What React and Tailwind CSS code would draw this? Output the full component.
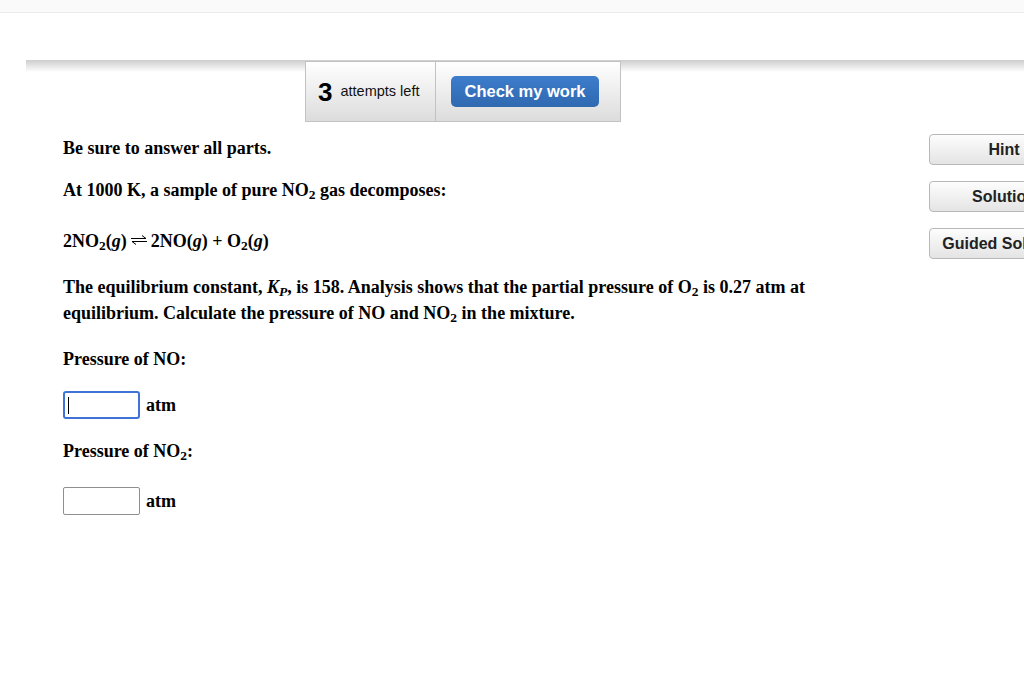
import React from 'react';

function EqArrow() {
  return (
    <svg width="18" height="12" viewBox="0 0 18 12" className="mx-[3px] inline-block align-[1px]" fill="none" stroke="#000" strokeWidth="1">
      <path d="M1 4.5h15M16 4.5l-4-3" />
      <path d="M17 7.5H2M2 7.5l4 3" />
    </svg>
  );
}

function SideButton({ children }) {
  return (
    <button className="h-[31px] w-[150px] rounded-[4px] border border-[#b8b8b8] bg-[linear-gradient(to_bottom,#fdfdfd,#e4e4e4)] text-center font-['Liberation_Sans',Arial,sans-serif] text-base font-bold text-[#222]">
      {children}
    </button>
  );
}

function AnswerBox({ focused }) {
  return (
    <div className="flex items-center gap-[6px]">
      {focused ? (
        <div className="flex h-[28px] w-[77px] items-center rounded-[3px] border-2 border-[#3f74d6] px-[3px]">
          <span className="h-[17px] w-px bg-black" />
        </div>
      ) : (
        <div className="h-[28px] w-[77px] rounded-[2px] border border-[#8f8f8f]" />
      )}
      <span>atm</span>
    </div>
  );
}

export default function App() {
  return (
    <div className="relative h-[675px] w-[1024px] overflow-hidden bg-white">
      <div className="h-[13px] border-b border-[#ececec] bg-[#fafafa]" />

      <div className="ml-[26px] mt-[47px] flex bg-[linear-gradient(to_bottom,#cdcdcd,#ffffff_12px)] pl-[279px]">
        <div className="mt-px flex h-[61px] border border-[#c2c2c2] bg-[linear-gradient(to_bottom,#ffffff,#dcdcdc)] font-['Liberation_Sans',Arial,sans-serif]">
          <div className="flex w-[130px] items-center gap-[8px] border-r border-[#c2c2c2] pl-[12px]">
            <span className="text-[26px] font-bold leading-none">3</span>
            <span className="text-[14.5px] text-[#111]">attempts left</span>
          </div>
          <div className="flex w-[184px] items-center pl-[15px]">
            <button className="h-[31px] w-[148px] rounded-[5px] bg-[linear-gradient(to_bottom,#3d7dcc,#2f69b0)] text-[16.5px] font-bold text-white">
              Check my work
            </button>
          </div>
        </div>
      </div>

      <div className="flex">
        <div className="w-[929px] shrink-0 pl-[63px] pt-[16px] font-['Liberation_Serif','Times_New_Roman',serif] text-[18px] font-bold leading-[20px] text-black">
          <p>Be sure to answer all parts.</p>
          <p className="mt-[22px]">
            At 1000 K, a sample of pure NO<sub>2</sub> gas decomposes:
          </p>
          <p className="mt-[31px]">
            2NO<sub>2</sub>(<i>g</i>)<EqArrow />2NO(<i>g</i>) + O<sub>2</sub>(<i>g</i>)
          </p>
          <p className="mt-[23px] w-[752px] leading-[26px]">
            The equilibrium constant, <i>K</i>
            <sub>
              <i>P</i>
            </sub>
            , is 158. Analysis shows that the partial pressure of O<sub>2</sub> is 0.27 atm at equilibrium. Calculate the
            pressure of NO and NO<sub>2</sub> in the mixture.
          </p>
          <p className="mt-[23px]">Pressure of NO:</p>
          <div className="mt-[22px]">
            <AnswerBox focused />
          </div>
          <p className="mt-[22px]">
            Pressure of NO<sub>2</sub>:
          </p>
          <div className="mt-[26px]">
            <AnswerBox />
          </div>
        </div>

        <div className="flex shrink-0 flex-col gap-[16px] pt-[12px]">
          <SideButton>Hint</SideButton>
          <SideButton>Solution</SideButton>
          <SideButton>Guided Solution</SideButton>
        </div>
      </div>
    </div>
  );
}
